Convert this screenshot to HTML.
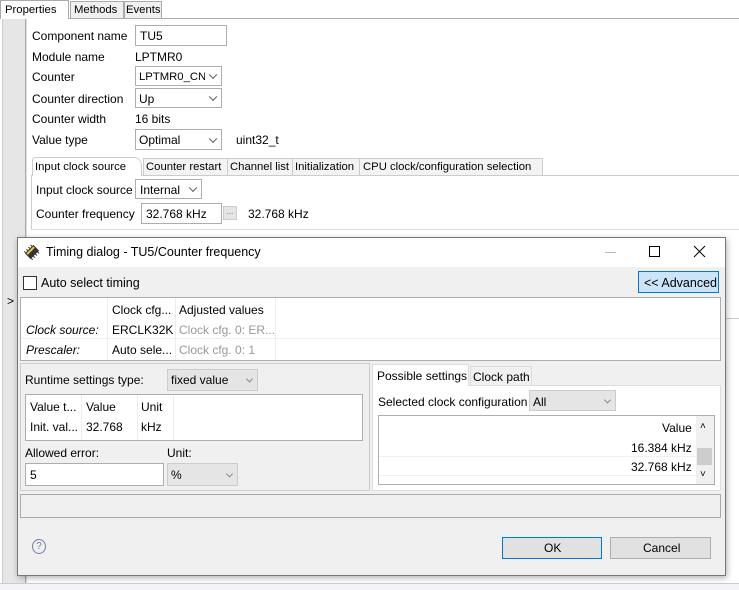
<!DOCTYPE html>
<html><head><meta charset="utf-8"><style>
*{box-sizing:border-box;margin:0;padding:0}
body{width:739px;height:590px;overflow:hidden;background:#fff;font-family:"Liberation Sans",sans-serif;font-size:12px;color:#000;position:relative}
.a{position:absolute}
.t{position:absolute;white-space:nowrap;line-height:14px}
.box{position:absolute;border:1px solid #adadad;background:#fff}
.cb{position:absolute;border:1px solid #adadad;background:#fff}
.cb .v{position:absolute;right:5px;top:50%;width:6px;height:6px;border-right:1px solid #555;border-bottom:1px solid #555;transform:translateY(-70%) rotate(45deg)}
.g{color:#999}
.i{font-style:italic}
.s{font-size:11.3px}
</style></head><body>
<div class="a" style="left:0;top:18px;width:739px;height:1px;background:#aaa"></div>
<div class="a" style="left:0;top:0;width:69px;height:19px;background:#fff;border:1px solid #aaa;border-bottom:none"></div>
<div class="t s" style="left:5px;top:3px">Properties</div>
<div class="a" style="left:70px;top:1px;width:54px;height:18px;background:#f0f0f0;border:1px solid #aaa"></div>
<div class="t s" style="left:74px;top:3px">Methods</div>
<div class="a" style="left:124px;top:1px;width:38px;height:18px;background:#f0f0f0;border:1px solid #aaa"></div>
<div class="t s" style="left:126px;top:3px">Events</div>
<div class="a" style="left:0;top:19px;width:3px;height:565px;background:#fff;border-right:1px solid #ccc"></div>
<div class="a" style="left:3px;top:19px;width:22px;height:565px;background:#e6e6e6"></div>
<div class="a" style="left:25px;top:19px;width:2px;height:565px;border-left:1px solid #aaa;border-right:1px solid #ddd"></div>
<div class="t" style="left:7px;top:294px">&gt;</div>
<div class="t" style="left:32px;top:29px">Component name</div>
<div class="box" style="left:135px;top:25px;width:92px;height:21px"></div>
<div class="t" style="left:140px;top:29px">TU5</div>
<div class="t" style="left:32px;top:50px">Module name</div>
<div class="t" style="left:135px;top:50px">LPTMR0</div>
<div class="t" style="left:32px;top:70px">Counter</div>
<div class="cb" style="left:135px;top:66px;width:87px;height:20px"><div class="v"></div></div>
<div class="t s" style="left:139px;top:70px;width:66px;overflow:hidden">LPTMR0_CNI</div>
<div class="t" style="left:32px;top:92px">Counter direction</div>
<div class="cb" style="left:135px;top:88px;width:87px;height:20px"><div class="v"></div></div>
<div class="t" style="left:139px;top:92px">Up</div>
<div class="t" style="left:32px;top:112px">Counter width</div>
<div class="t" style="left:135px;top:112px">16 bits</div>
<div class="t" style="left:32px;top:133px">Value type</div>
<div class="cb" style="left:135px;top:129px;width:87px;height:21px"><div class="v"></div></div>
<div class="t" style="left:139px;top:133px">Optimal</div>
<div class="t" style="left:236px;top:133px">uint32_t</div>
<div class="a" style="left:31px;top:175px;width:708px;height:1px;background:#ccc"></div>
<div class="a" style="left:31px;top:175px;width:1px;height:55px;background:#ccc"></div>
<div class="a" style="left:31px;top:229px;width:708px;height:1px;background:#ddd"></div>
<div class="a" style="left:32px;top:157px;width:110px;height:19px;background:#fff;border:1px solid #ccc;border-bottom:none;border-radius:3px 8px 0 0"></div>
<div class="t s" style="left:35px;top:160px">Input clock source</div>
<div class="a" style="left:143px;top:158px;width:400px;height:17px;background:#f3f3f3;border:1px solid #ccc;border-bottom:none"></div>
<div class="t s" style="left:146px;top:160px">Counter restart</div>
<div class="a" style="left:227px;top:158px;width:1px;height:17px;background:#ccc"></div>
<div class="t s" style="left:230px;top:160px">Channel list</div>
<div class="a" style="left:292px;top:158px;width:1px;height:17px;background:#ccc"></div>
<div class="t s" style="left:295px;top:160px">Initialization</div>
<div class="a" style="left:359px;top:158px;width:1px;height:17px;background:#ccc"></div>
<div class="t s" style="left:363px;top:160px">CPU clock/configuration selection</div>
<div class="t" style="left:36px;top:183px">Input clock source</div>
<div class="cb" style="left:135px;top:179px;width:67px;height:20px"><div class="v"></div></div>
<div class="t" style="left:140px;top:183px">Internal</div>
<div class="t" style="left:36px;top:207px">Counter frequency</div>
<div class="box" style="left:141px;top:203px;width:81px;height:21px"></div>
<div class="t" style="left:146px;top:207px">32.768 kHz</div>
<div class="a" style="left:223px;top:206px;width:14px;height:14px;background:#e5e5e5;border:1px solid #ccc;font-size:8px;text-align:center;line-height:10px;color:#666">...</div>
<div class="t" style="left:248px;top:207px">32.768 kHz</div>
<div class="a" style="left:725px;top:318px;width:14px;height:1px;background:#ccc"></div>
<div class="a" style="left:0;top:583px;width:739px;height:7px;background:#f3f4f8;border-top:1px solid #ccc"></div>
<div class="a" style="left:17px;top:237px;width:709px;height:339px;background:#f0f0f0;border:1px solid #777;box-shadow:1px 2px 6px rgba(0,0,0,.3)"></div>
<div class="a" style="left:18px;top:238px;width:707px;height:29px;background:#fff"></div>
<svg class="a" style="left:24px;top:244px" width="16" height="16" viewBox="0 0 16 16"><g transform="rotate(45 8 8)"><rect x="4" y="2" width="8" height="12" fill="#333"/><g stroke="#333" stroke-width="1"><path d="M2 4h2M2 7h2M2 10h2M2 13h2M12 4h2M12 7h2M12 10h2M12 13h2"/></g><rect x="5" y="3" width="2" height="10" fill="#e8c34a"/></g></svg>
<div class="t" style="left:46px;top:245px;font-size:12.5px">Timing dialog - TU5/Counter frequency</div>
<div class="a" style="left:605px;top:252px;width:11px;height:1px;background:#bbb"></div>
<div class="a" style="left:649px;top:246px;width:11px;height:11px;border:1px solid #000"></div>
<svg class="a" style="left:693px;top:245px" width="13" height="13"><path d="M1 1L12 12M12 1L1 12" stroke="#000" stroke-width="1"/></svg>
<div class="a" style="left:23px;top:276px;width:14px;height:14px;background:#fff;border:1px solid #333"></div>
<div class="t" style="left:41px;top:276px;font-size:12.5px">Auto select timing</div>
<div class="a" style="left:638px;top:271px;width:81px;height:22px;background:#cce4f7;border:1px solid #0078d7"></div>
<div class="t" style="left:644px;top:276px;font-size:12.5px">&lt;&lt; Advanced</div>
<div class="box" style="left:20px;top:297px;width:701px;height:64px"></div>
<div class="a" style="left:107px;top:298px;width:1px;height:62px;background:#e8eef5"></div>
<div class="a" style="left:175px;top:298px;width:1px;height:62px;background:#e8eef5"></div>
<div class="a" style="left:275px;top:298px;width:1px;height:62px;background:#e8eef5"></div>
<div class="a" style="left:21px;top:338px;width:699px;height:1px;background:#eef0f4"></div>
<div class="t" style="left:112px;top:303px">Clock cfg...</div>
<div class="t" style="left:179px;top:303px">Adjusted values</div>
<div class="t i" style="left:26px;top:323px">Clock source:</div>
<div class="t" style="left:112px;top:323px">ERCLK32K</div>
<div class="t g" style="left:179px;top:323px">Clock cfg. 0: ER...</div>
<div class="t i" style="left:26px;top:343px">Prescaler:</div>
<div class="t" style="left:112px;top:343px">Auto sele...</div>
<div class="t g" style="left:179px;top:343px">Clock cfg. 0: 1</div>
<div class="a" style="left:20px;top:363px;width:350px;height:128px;border:1px solid #ccc"></div>
<div class="t" style="left:25px;top:373px">Runtime settings type:</div>
<div class="cb" style="left:167px;top:369px;width:91px;height:22px;background:#e5e5e5;border-color:#ccc"><div class="v" style="border-color:#888;width:5px;height:5px"></div></div>
<div class="t" style="left:171px;top:373px">fixed value</div>
<div class="box" style="left:25px;top:394px;width:338px;height:47px"></div>
<div class="a" style="left:81px;top:395px;width:1px;height:45px;background:#e8eef5"></div>
<div class="a" style="left:137px;top:395px;width:1px;height:45px;background:#e8eef5"></div>
<div class="a" style="left:173px;top:395px;width:1px;height:45px;background:#e8eef5"></div>
<div class="t" style="left:30px;top:400px">Value t...</div>
<div class="t" style="left:86px;top:400px">Value</div>
<div class="t" style="left:141px;top:400px">Unit</div>
<div class="t" style="left:30px;top:420px">Init. val...</div>
<div class="t" style="left:86px;top:420px">32.768</div>
<div class="t" style="left:141px;top:420px">kHz</div>
<div class="t" style="left:25px;top:446px">Allowed error:</div>
<div class="t" style="left:167px;top:446px">Unit:</div>
<div class="box" style="left:25px;top:463px;width:139px;height:23px"></div>
<div class="t" style="left:30px;top:468px">5</div>
<div class="cb" style="left:167px;top:463px;width:71px;height:23px;background:#e5e5e5;border-color:#ccc"><div class="v" style="border-color:#888;width:5px;height:5px"></div></div>
<div class="t" style="left:171px;top:468px">%</div>
<div class="a" style="left:372px;top:385px;width:349px;height:106px;background:#fff;border:1px solid #ddd"></div>
<div class="a" style="left:372px;top:364px;width:97px;height:22px;background:#fff;border:1px solid #ddd;border-bottom:none"></div>
<div class="t" style="left:377px;top:369px">Possible settings</div>
<div class="a" style="left:470px;top:366px;width:62px;height:19px;background:#f0f0f0;border:1px solid #ddd;border-bottom:none"></div>
<div class="t" style="left:473px;top:370px">Clock path</div>
<div class="t" style="left:378px;top:395px">Selected clock configuration</div>
<div class="cb" style="left:529px;top:390px;width:87px;height:21px;background:#e5e5e5;border-color:#ccc"><div class="v" style="border-color:#888;width:5px;height:5px"></div></div>
<div class="t" style="left:533px;top:395px">All</div>
<div class="box" style="left:378px;top:415px;width:337px;height:70px"></div>
<div class="a" style="left:379px;top:456px;width:317px;height:1px;background:#eef0f4"></div>
<div class="a" style="left:379px;top:475px;width:317px;height:1px;background:#eef0f4"></div>
<div class="t" style="left:662px;top:421px">Value</div>
<div class="t" style="left:631px;top:441px">16.384 kHz</div>
<div class="t" style="left:631px;top:460px">32.768 kHz</div>
<div class="a" style="left:696px;top:416px;width:18px;height:68px;background:#f0f0f0"></div>
<div class="a" style="left:697px;top:448px;width:15px;height:17px;background:#cdcdcd"></div>
<div class="t" style="left:700px;top:420px;font-size:10px">&#x2C4;</div>
<div class="t" style="left:700px;top:468px;font-size:10px">&#x2C5;</div>
<div class="a" style="left:20px;top:494px;width:701px;height:24px;border:1px solid #aaa"></div>
<div class="a" style="left:32px;top:539px;width:14px;height:15px;border:1px solid #6d7fa8;border-radius:50%;font-size:10px;line-height:13px;text-align:center;color:#6d7fa8">?</div>
<div class="a" style="left:502px;top:537px;width:100px;height:22px;background:#e1e1e1;border:1px solid #0078d7"></div>
<div class="t" style="left:544px;top:541px">OK</div>
<div class="a" style="left:610px;top:537px;width:101px;height:22px;background:#e1e1e1;border:1px solid #adadad"></div>
<div class="t" style="left:643px;top:541px">Cancel</div>
</body></html>
